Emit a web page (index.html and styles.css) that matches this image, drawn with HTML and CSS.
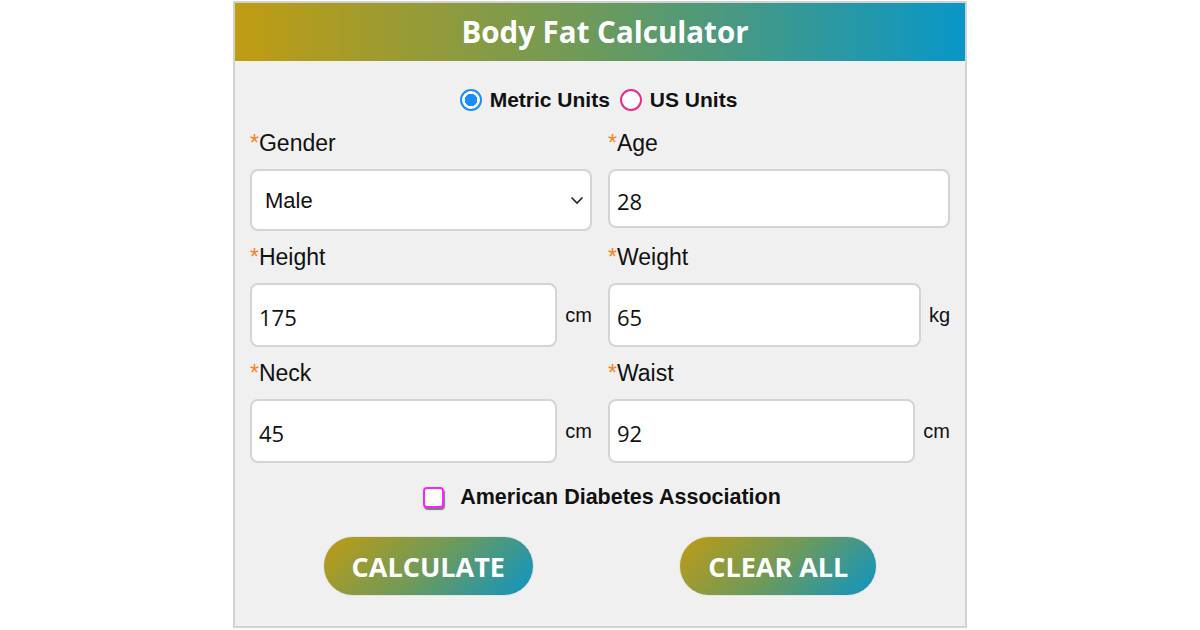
FILE: index.html
```html
<!DOCTYPE html>
<html lang="en">
<head>
    <meta charset="UTF-8">
    <meta name="viewport" content="width=device-width, initial-scale=1.0">
    <title>Body Fat Calculator</title>
    <link rel="stylesheet" href="styles.css">
</head>
<body>
    <div class="calculator">
        <div class="calc-header">Body Fat Calculator</div>

        <div class="calc-body">
            <div class="units">
                <label class="unit-option">
                    <input type="radio" name="units" class="radio metric" checked>
                    <span>Metric Units</span>
                </label>
                <label class="unit-option">
                    <input type="radio" name="units" class="radio us">
                    <span>US Units</span>
                </label>
            </div>

            <div class="grid">
                <div class="field">
                    <label class="field-label"><span class="req">*</span>Gender</label>
                    <div class="select-wrap">
                        <select class="control select">
                            <option>Male</option>
                            <option>Female</option>
                        </select>
                        <svg class="chevron" width="14" height="9" viewBox="0 0 14 9">
                            <path d="M1.5 1.5 L7 7 L12.5 1.5" fill="none" stroke="#222" stroke-width="1.6"/>
                        </svg>
                    </div>
                </div>
                <div class="field">
                    <label class="field-label"><span class="req">*</span>Age</label>
                    <input class="control input short" type="text" value="28">
                </div>

                <div class="field">
                    <label class="field-label"><span class="req">*</span>Height</label>
                    <div class="with-unit">
                        <input class="control input" type="text" value="175">
                        <span class="unit">cm</span>
                    </div>
                </div>
                <div class="field">
                    <label class="field-label"><span class="req">*</span>Weight</label>
                    <div class="with-unit">
                        <input class="control input" type="text" value="65">
                        <span class="unit">kg</span>
                    </div>
                </div>

                <div class="field">
                    <label class="field-label"><span class="req">*</span>Neck</label>
                    <div class="with-unit">
                        <input class="control input" type="text" value="45">
                        <span class="unit">cm</span>
                    </div>
                </div>
                <div class="field">
                    <label class="field-label"><span class="req">*</span>Waist</label>
                    <div class="with-unit">
                        <input class="control input" type="text" value="92">
                        <span class="unit">cm</span>
                    </div>
                </div>
            </div>

            <label class="ada">
                <input type="checkbox" class="checkbox">
                <span>American Diabetes Association</span>
            </label>

            <div class="actions">
                <button class="btn">CALCULATE</button>
                <button class="btn">CLEAR ALL</button>
            </div>
        </div>
    </div>
</body>
</html>
```

FILE: styles.css
```css
body {
    margin: 0;
    background: #ffffff;
    font-family: 'Liberation Sans', Arial, sans-serif;
    color: #111;
}
.calculator {
    width: 730px;
    margin: 1px auto 0;
    border: 2px solid #d2d2d2;
    background: #f0f0f0;
}
.calc-header {
    height: 58px;
    line-height: 58px;
    padding-left: 10px;
    text-align: center;
    color: #fff;
    font-family: 'Open Sans', sans-serif;
    font-weight: 700;
    font-size: 29.5px;
    background: linear-gradient(to right, #c09c12, #6b9a5c 50%, #0897c8);
}
.calc-body {
    padding: 25px 15px 30px;
}
.units {
    display: flex;
    justify-content: center;
    align-items: center;
    gap: 10px;
    height: 28px;
    margin-right: 3px;
}
.unit-option {
    display: flex;
    align-items: center;
    gap: 8px;
    font-weight: 700;
    font-size: 21px;
}
.radio {
    appearance: none;
    width: 22px;
    height: 22px;
    margin: 0;
    border-radius: 50%;
    background: #fff;
}
.radio.metric {
    border: 2px solid #1a8cff;
}
.radio.metric:checked {
    background: radial-gradient(circle, #1a8cff 0 6px, #fff 6.5px);
}
.radio.us {
    border: 2px solid #ec2a8c;
}
.grid {
    display: grid;
    grid-template-columns: 1fr 1fr;
    column-gap: 16px;
    row-gap: 12px;
    margin-top: 15px;
}
.field-label {
    display: block;
    height: 28px;
    line-height: 28px;
    font-size: 23px;
    margin-bottom: 12px;
}
.req {
    color: #f5821f;
}
.control {
    box-sizing: border-box;
    width: 100%;
    height: 64px;
    border: 2px solid #d4d4d4;
    border-radius: 8px;
    background: #fff;
    font-size: 22px;
    color: #111;
    outline: none;
}
.input {
    padding: 4px 7px 0;
    font-family: 'Open Sans', sans-serif;
}
.input.short {
    height: 59px;
}
.select-wrap {
    position: relative;
}
.select {
    appearance: none;
    height: 62px;
    padding: 0 13px;
    font-family: 'Liberation Sans', Arial, sans-serif;
}
.chevron {
    position: absolute;
    right: 8px;
    top: 27px;
}
.with-unit {
    display: flex;
    align-items: center;
}
.with-unit .input {
    flex: 1;
    width: auto;
}
.unit {
    margin-left: 8px;
    font-size: 20px;
}
.ada {
    display: flex;
    justify-content: center;
    align-items: center;
    gap: 16px;
    margin-top: 22px;
    margin-left: 4px;
    font-weight: 700;
    font-size: 21.5px;
}
.checkbox {
    appearance: none;
    width: 21px;
    height: 21px;
    margin: 0;
    border: 2px solid #ff22ff;
    border-radius: 4px;
    background: #fff;
    box-shadow: 1px 2px 1px #7a7a7a;
}
.actions {
    display: flex;
    justify-content: space-around;
    margin-top: 26px;
}
.btn {
    height: 60px;
    padding: 0 28px;
    border: 1px solid #e4e4e4;
    border-radius: 30px;
    color: #fff;
    font-family: 'Open Sans', sans-serif;
    font-weight: 700;
    font-size: 27px;
    background: linear-gradient(135deg, #bf9b14, #6e9a5a 50%, #0c95c6);
    cursor: pointer;
}
```
